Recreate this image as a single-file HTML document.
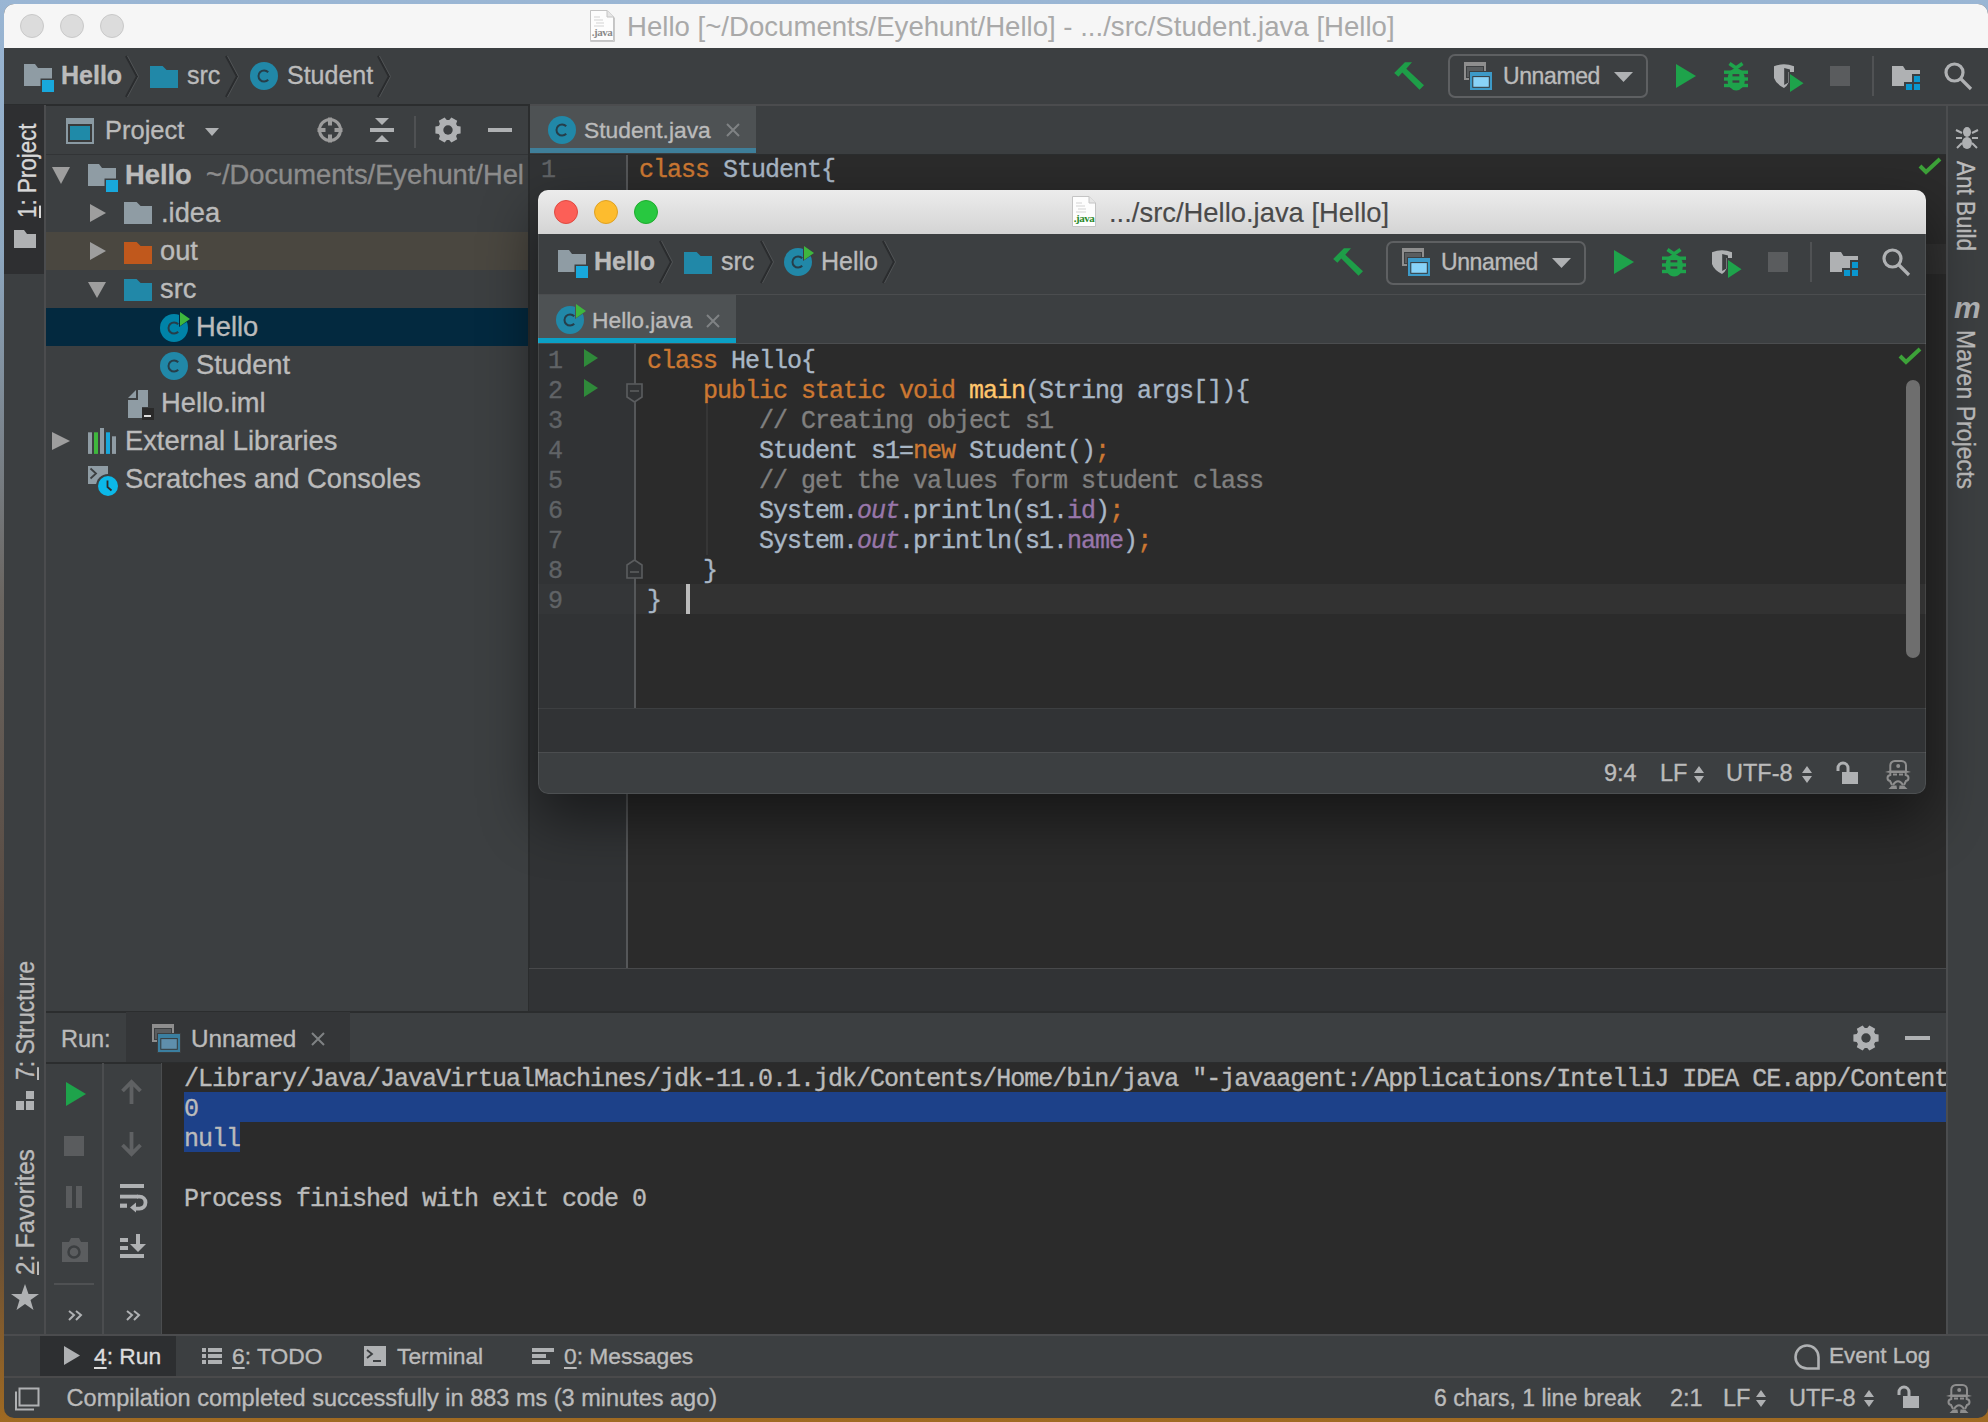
<!DOCTYPE html>
<html><head><meta charset="utf-8"><style>
*{box-sizing:border-box}
html,body{margin:0;padding:0;width:1988px;height:1422px;overflow:hidden}
body{position:relative;background:linear-gradient(180deg,#9ab6d4 0px,#8ea8c0 250px,#6a6560 600px,#54443a 1000px,#6a5035 1250px,#a06a22 1422px);font-family:"Liberation Sans",sans-serif;color:#bbbbbb}
.a{position:absolute}
.s{position:absolute;white-space:pre;line-height:1;font-family:"Liberation Sans",sans-serif;-webkit-text-stroke:0.35px currentColor}
.m{position:absolute;white-space:pre;font-family:"Liberation Mono",monospace;font-size:25px;letter-spacing:-1px;line-height:30px;color:#a9b7c6;-webkit-text-stroke:0.35px currentColor}
.kw{color:#cc7832}
.fn{color:#ffc66d}
.fd{color:#9876aa;font-style:italic}
.fd2{color:#9876aa}
.cm{color:#808080}
.ln{color:#606366}
svg.L{position:absolute;left:0;top:0;width:1988px;height:1422px;overflow:visible}
u{text-decoration:underline;text-underline-offset:3px;text-decoration-thickness:2px}
</style></head><body>
<div class="a" style="left:4px;top:4px;width:1984px;height:1414px;background:#3c3f41;border-radius:10px"></div>
<div class="a" style="left:4px;top:4px;width:1984px;height:44px;background:#f6f6f6;border-radius:10px 10px 0 0"></div>
<div class="a" style="left:20px;top:14px;width:24px;height:24px;border-radius:50%;background:#dcdcdc;border:1px solid #c9c9c9"></div>
<div class="a" style="left:60px;top:14px;width:24px;height:24px;border-radius:50%;background:#dcdcdc;border:1px solid #c9c9c9"></div>
<div class="a" style="left:100px;top:14px;width:24px;height:24px;border-radius:50%;background:#dcdcdc;border:1px solid #c9c9c9"></div>
<div class="a" style="left:4px;top:104px;width:526px;height:2px;background:#2b2d2e;"></div>
<div class="a" style="left:530px;top:104px;width:1458px;height:2px;background:#4b4c4e;"></div>
<div class="a" style="left:4px;top:105px;width:40px;height:169px;background:#2e2f31;"></div>
<div class="a" style="left:44px;top:105px;width:2px;height:1230px;background:#4b4c4e;"></div>
<div class="a" style="left:46px;top:154px;width:482px;height:1px;background:#323436;"></div>
<div class="a" style="left:46px;top:232px;width:482px;height:38px;background:#4a4740;"></div>
<div class="a" style="left:46px;top:308px;width:482px;height:38px;background:#03293f;"></div>
<div class="a" style="left:414px;top:116px;width:2px;height:32px;background:#4f5153;"></div>
<div class="a" style="left:528px;top:105px;width:2px;height:907px;background:#2b2d2e;"></div>
<div class="a" style="left:530px;top:106px;width:226px;height:47px;background:#4e5254;"></div>
<div class="a" style="left:530px;top:148px;width:226px;height:5px;background:#3f7f9a;"></div>
<div class="a" style="left:530px;top:154px;width:1416px;height:1px;background:#2b2d2e;"></div>
<div class="a" style="left:530px;top:155px;width:96px;height:813px;background:#313335;"></div>
<div class="a" style="left:626px;top:155px;width:2px;height:813px;background:#555759;"></div>
<div class="a" style="left:628px;top:155px;width:1318px;height:813px;background:#2b2b2b;"></div>
<div class="a" style="left:628px;top:244px;width:1318px;height:30px;background:#323232;"></div>
<div class="a" style="left:529px;top:968px;width:1417px;height:1px;background:#48494b;"></div>
<div class="a" style="left:529px;top:969px;width:1417px;height:42px;background:#313335;"></div>
<div class="a" style="left:1946px;top:105px;width:2px;height:1230px;background:#4b4d4f;"></div>
<div class="a" style="left:46px;top:1011px;width:1900px;height:2px;background:#2b2d2e;"></div>
<div class="a" style="left:126px;top:1012px;width:224px;height:50px;background:#343638;"></div>
<div class="a" style="left:46px;top:1062px;width:1900px;height:2px;background:#2b2d2e;"></div>
<div class="a" style="left:102px;top:1063px;width:2px;height:272px;background:#4b4d4f;"></div>
<div class="a" style="left:161px;top:1063px;width:1px;height:272px;background:#4b4d4f;"></div>
<div class="a" style="left:162px;top:1063px;width:1784px;height:272px;background:#2b2b2b;"></div>
<div class="a" style="left:184px;top:1092px;width:1762px;height:30px;background:#1d4189;"></div>
<div class="a" style="left:184px;top:1122px;width:56px;height:30px;background:#1d4189;"></div>
<div class="a" style="left:54px;top:1283px;width:40px;height:2px;background:#4f5153;"></div>
<div class="a" style="left:4px;top:1334px;width:1984px;height:2px;background:#4b4c4e;"></div>
<div class="a" style="left:40px;top:1336px;width:136px;height:40px;background:#2d2f31;"></div>
<div class="a" style="left:4px;top:1376px;width:1984px;height:2px;background:#4a4a4b;"></div>
<div class="s" style="left:627px;top:13.1px;font-size:27.6px;color:#a9a9a9;-webkit-text-stroke:0">Hello [~/Documents/Eyehunt/Hello] - .../src/Student.java [Hello]</div>
<div class="s" style="left:61px;top:62.8px;font-size:25px;color:#bbbbbb;font-weight:bold">Hello</div>
<div class="s" style="left:187px;top:62.8px;font-size:25px;color:#bbbbbb;">src</div>
<div class="s" style="left:287px;top:62.8px;font-size:25px;color:#bbbbbb;">Student</div>
<div class="s" style="left:1503px;top:64.5px;font-size:23px;color:#bbbbbb;letter-spacing:-0.4px">Unnamed</div>
<div class="s" style="left:105px;top:118.0px;font-size:25.5px;color:#bbbbbb;">Project</div>
<div class="s" style="left:125px;top:160.9px;font-size:27.3px;color:#bbbbbb;font-weight:bold">Hello</div>
<div class="s" style="left:161px;top:198.9px;font-size:27.3px;color:#bbbbbb;">.idea</div>
<div class="s" style="left:160px;top:236.9px;font-size:27.3px;color:#bbbbbb;">out</div>
<div class="s" style="left:160px;top:274.9px;font-size:27.3px;color:#bbbbbb;">src</div>
<div class="s" style="left:196px;top:312.9px;font-size:27.3px;color:#bbbbbb;">Hello</div>
<div class="s" style="left:196px;top:350.9px;font-size:27.3px;color:#bbbbbb;">Student</div>
<div class="s" style="left:161px;top:388.9px;font-size:27.3px;color:#bbbbbb;">Hello.iml</div>
<div class="s" style="left:125px;top:426.9px;font-size:27.3px;color:#bbbbbb;">External Libraries</div>
<div class="s" style="left:125px;top:464.9px;font-size:27.3px;color:#bbbbbb;">Scratches and Consoles</div>
<div class="s" style="left:206px;top:160.9px;font-size:27.3px;color:#8c8c8c;">~/Documents/Eyehunt/Hel</div>
<div class="s" style="left:584px;top:118.7px;font-size:22.8px;color:#bbbbbb;">Student.java</div>
<div class="m" style="left:541px;top:156.3px;"><span class="ln">1</span></div>
<div class="m" style="left:639px;top:156.3px;"><span class="kw">class</span> Student{</div>
<div class="s" style="left:61px;top:1028.1px;font-size:23.5px;color:#bbbbbb;">Run:</div>
<div class="s" style="left:191px;top:1027.4px;font-size:24.3px;color:#bbbbbb;">Unnamed</div>
<div class="m" style="left:184px;top:1065.3px;color:#bbbbbb;width:1762px;overflow:hidden">/Library/Java/JavaVirtualMachines/jdk-11.0.1.jdk/Contents/Home/bin/java "-javaagent:/Applications/IntelliJ IDEA CE.app/Contents/Lib/idea_rt.jar</div>
<div class="m" style="left:184px;top:1095.3px;color:#bbbbbb">0</div>
<div class="m" style="left:184px;top:1125.3px;color:#bbbbbb">null</div>
<div class="m" style="left:184px;top:1185.3px;color:#bbbbbb">Process finished with exit code 0</div>
<div class="s" style="left:94px;top:1344.7px;font-size:22.8px;color:#dddddd;"><u>4</u>: Run</div>
<div class="s" style="left:232px;top:1344.7px;font-size:22.8px;color:#bbbbbb;"><u>6</u>: TODO</div>
<div class="s" style="left:397px;top:1344.7px;font-size:22.8px;color:#bbbbbb;">Terminal</div>
<div class="s" style="left:564px;top:1344.7px;font-size:22.8px;color:#bbbbbb;"><u>0</u>: Messages</div>
<div class="s" style="left:1829px;top:1345.0px;font-size:22.5px;color:#bbbbbb;">Event Log</div>
<div class="s" style="left:66.6px;top:1386.6px;font-size:23.5px;color:#bbbbbb;">Compilation completed successfully in 883 ms (3 minutes ago)</div>
<div class="s" style="left:1434px;top:1387.0px;font-size:23px;color:#bbbbbb;">6 chars, 1 line break</div>
<div class="s" style="left:1670px;top:1386.6px;font-size:23.5px;color:#bbbbbb;">2:1</div>
<div class="s" style="left:1723px;top:1386.6px;font-size:23.5px;color:#bbbbbb;">LF</div>
<div class="s" style="left:1789px;top:1386.6px;font-size:23.5px;color:#bbbbbb;">UTF-8</div>
<div class="s" style="left:35.5px;top:218px;font-size:26px;color:#d8d8d8;transform-origin:0 0;transform:rotate(-90deg) scaleX(0.86) translateY(-22.0px)"><u>1</u>: Project</div>
<div class="s" style="left:33.5px;top:1080px;font-size:26px;color:#bbbbbb;transform-origin:0 0;transform:rotate(-90deg) scaleX(0.885) translateY(-22.0px)"><u>7</u>: Structure</div>
<div class="s" style="left:33.5px;top:1275px;font-size:26px;color:#bbbbbb;transform-origin:0 0;transform:rotate(-90deg) scaleX(0.927) translateY(-22.0px)"><u>2</u>: Favorites</div>
<div class="s" style="left:1957px;top:161px;font-size:26px;color:#bbbbbb;transform-origin:0 0;transform:rotate(90deg) scaleX(0.865) translateY(-22.0px)">Ant Build</div>
<div class="s" style="left:1957px;top:330px;font-size:26px;color:#bbbbbb;transform-origin:0 0;transform:rotate(90deg) scaleX(0.888) translateY(-22.0px)">Maven Projects</div>
<svg class="L"><path d="M590.5 10.5H607L614.5 18V41.5H590.5Z" fill="#fbfbfb" stroke="#c8c8c8"/><g transform="translate(590,10)"><path d="M0.5 0.5H17L23.5 7V30.5H0.5Z" fill="#fdfdfd" stroke="#c4c4c4"/><path d="M17 0.5V7H23.5" fill="#e6e6e6" stroke="#c4c4c4"/><path d="M4 7h6M4 10h9M6 13h8M4 16h10" stroke="#c8c8c8" stroke-width="0.8"/><text x="12.0" y="26" font-family="Liberation Serif" font-weight="bold" font-size="11" fill="#8a8a8a" text-anchor="middle" letter-spacing="-0.5">.java</text></g><path d="M24 64h11l3 4h14v11h-10v7H24Z" fill="#8f9ca4"/><rect x="40.5" y="78.5" width="15" height="15" fill="#3c3f41"/><rect x="42" y="80" width="12" height="12" fill="#18a8dc"/><path d="M126 56L137 76.5L126 97" fill="none" stroke="#2a2c2e" stroke-width="2.2"/><path d="M127.5 56L138.5 76.5L127.5 97" fill="none" stroke="#505355" stroke-width="1"/><path d="M150 66h12.6l4.0 4.0H178V88H150Z" fill="#2188a8"/><path d="M226 56L237 76.5L226 97" fill="none" stroke="#2a2c2e" stroke-width="2.2"/><path d="M227.5 56L238.5 76.5L227.5 97" fill="none" stroke="#505355" stroke-width="1"/><circle cx="264" cy="76" r="14" fill="#2188a8"/><path d="M268.2 72.2A5.6 5.6 0 1 0 268.2 79.8" fill="none" stroke="#263e4a" stroke-width="2"/><path d="M378 56L389 76.5L378 97" fill="none" stroke="#2a2c2e" stroke-width="2.2"/><path d="M379.5 56L390.5 76.5L379.5 97" fill="none" stroke="#505355" stroke-width="1"/><g transform="translate(0,0)"><path d="M1394.2 72.9L1404.9 62.2L1412 62.2L1406.3 68.7L1424 85.3L1419.5 89.8L1402.3 72.6L1398.4 76.8Z" fill="#1e9e48"/></g><rect x="1449" y="55" width="198" height="42" rx="6" fill="none" stroke="#5e6062" stroke-width="2"/><g transform="translate(0,0)"><rect x="1464" y="62" width="22" height="18" fill="#8e8e8e"/><rect x="1466" y="66" width="18" height="12" fill="#3c3f41"/><rect x="1467" y="67" width="16" height="10" fill="#5a5d5f"/><rect x="1469" y="71" width="24" height="20" fill="#3c3f41"/><rect x="1470" y="72" width="22" height="18" fill="#3d9ac8"/><rect x="1472.3" y="76.1" width="17.5" height="11.7" fill="#3a3a3a"/><rect x="1473.3" y="77.1" width="15.5" height="9.7" fill="#89d3f8"/></g><path d="M1614 72H1633L1623.5 82Z" fill="#afb1b3"/><path d="M1676 64L1696 76.0L1676 88Z" fill="#1ea34b"/><g transform="translate(0,0)" fill="#1ea34b"><path d="M1729.5 63.5L1736 68L1742.5 63.5" fill="none" stroke="#1ea34b" stroke-width="3.6"/><ellipse cx="1736.2" cy="79.5" rx="8.8" ry="11"/><rect x="1724" y="70.5" width="24" height="3.4"/><rect x="1724" y="77.3" width="24" height="3.4"/><rect x="1724" y="83.8" width="24" height="3.4"/><rect x="1732.5" y="74.1" width="6.8" height="2.3" fill="#3c3f41"/><rect x="1732.5" y="80.4" width="6.8" height="2.3" fill="#3c3f41"/></g><g transform="translate(0,0)"><path d="M1774 66.2Q1784 62.5 1794 66.2V72H1789V82Q1787 86 1784 88Q1776 84 1774 78Z" fill="#afb1b3"/><path d="M1784.2 68L1790 69.4V72H1788.5V82.5L1784.2 85Z" fill="#3c3f41"/><path d="M1790 74.1L1803.5 83.2L1790 92Z" fill="#1ea34b"/></g><rect x="1830" y="66" width="20" height="20" fill="#5a5c5e"/><rect x="1872" y="56" width="2" height="40" fill="#505254"/><g transform="translate(0,0)"><path d="M1892 66H1903L1905.5 70.1H1920V74H1912V82H1904V86H1892Z" fill="#afb1b3"/><rect x="1914" y="76" width="6" height="6" fill="#0a97cf"/><rect x="1906" y="84" width="6" height="6" fill="#0a97cf"/><rect x="1914" y="84" width="6" height="6" fill="#0a97cf"/></g><g transform="translate(1944,62)" fill="none" stroke="#afb1b3" stroke-width="3.2"><circle cx="10.5" cy="10.5" r="8.5"/><path d="M16.5 16.5L27 27"/></g><rect x="66" y="118" width="28" height="26" fill="#8a9aa3"/><rect x="68" y="124" width="24" height="18" fill="#3a3a3a"/><rect x="70" y="126" width="20" height="14" fill="#1f8aa8"/><path d="M205 128H219L212.0 136Z" fill="#afb1b3"/><g fill="none" stroke="#9c9c9c" stroke-width="3"><circle cx="330" cy="130" r="10.5"/></g><g fill="#9c9c9c"><rect x="328" y="117.5" width="4" height="8"/><rect x="328" y="134.5" width="4" height="8"/><rect x="317.5" y="128" width="8" height="4"/><rect x="334.5" y="128" width="8" height="4"/></g><path d="M375 118H389L382 125Z" fill="#afb1b3"/><rect x="370" y="128" width="24" height="4" fill="#afb1b3"/><path d="M375 142H389L382 135Z" fill="#afb1b3"/><path d="M460.6 126.6 L460.6 133.4 L457.3 134.0 L456.1 136.1 L457.2 139.2 L451.4 142.6 L449.2 140.1 L446.8 140.1 L444.6 142.6 L438.8 139.2 L439.9 136.1 L438.7 134.0 L435.4 133.4 L435.4 126.6 L438.7 126.0 L439.9 123.9 L438.8 120.8 L444.6 117.4 L446.8 119.9 L449.2 119.9 L451.4 117.4 L457.2 120.8 L456.1 123.9 L457.3 126.0Z" fill="#afb1b3"/><circle cx="448" cy="130" r="4.7" fill="#3c3f41"/><rect x="488" y="128" width="24" height="4" fill="#afb1b3"/><path d="M52 167H70L61.0 184Z" fill="#9e9e9e"/><path d="M88 164h11l3 4h14v11h-10v7H88Z" fill="#8f9ca4"/><rect x="104.5" y="178.5" width="15" height="15" fill="#3c3f41"/><rect x="106" y="180" width="12" height="12" fill="#18a8dc"/><path d="M90 204L106 213.0L90 222Z" fill="#9e9e9e"/><path d="M124 202h12.6l4.0 4.0H152V224H124Z" fill="#8f9ca4"/><path d="M90 242L106 251.0L90 260Z" fill="#9e9e9e"/><path d="M124 242h12.6l4.0 4.0H152V264H124Z" fill="#c0581c"/><path d="M88 282H106L97.0 298Z" fill="#9e9e9e"/><path d="M124 279h12.6l4.0 4.0H152V301H124Z" fill="#2188a8"/><circle cx="174" cy="328" r="14" fill="#0083a8"/><path d="M178.2 324.2A5.6 5.6 0 1 0 178.2 331.8" fill="none" stroke="#263e4a" stroke-width="2"/><path d="M179 311L191 319L179 327Z" fill="#03293f"/><path d="M180 312L190 319L180 326Z" fill="#3fb73d"/><circle cx="174" cy="366" r="14" fill="#2188a8"/><path d="M178.2 362.2A5.6 5.6 0 1 0 178.2 369.8" fill="none" stroke="#263e4a" stroke-width="2"/><path d="M128 398L136 390V398Z" fill="#8f9ca4"/><path d="M138 390H148V407H142V418H128V400H138Z" fill="#8f9ca4"/><rect x="142" y="408" width="12" height="12" fill="#2a2a2a"/><rect x="144" y="415" width="7" height="2" fill="#dddddd"/><path d="M52 432L70 441.0L52 450Z" fill="#9e9e9e"/><rect x="88" y="432.3" width="4" height="21.6" fill="#8f9ca4"/><rect x="94" y="432.3" width="4" height="21.6" fill="#3fb73d"/><rect x="100" y="428" width="4" height="25.9" fill="#8f9ca4"/><rect x="106" y="432.3" width="4" height="21.6" fill="#18a8dc"/><rect x="112" y="436.3" width="4" height="17.6" fill="#8f9ca4"/><rect x="88" y="466" width="20" height="18" fill="#8f9ca4"/><path d="M90.5 468.5L96 473.5L90.5 478.5" fill="none" stroke="#3c3f41" stroke-width="1.8"/><circle cx="108" cy="486" r="12" fill="#3c3f41"/><circle cx="108" cy="486" r="10" fill="#0bb8e8"/><path d="M107.5 480.5V487L111.5 490.5" fill="none" stroke="#2b2b2b" stroke-width="1.8"/><circle cx="562" cy="130" r="14" fill="#2188a8"/><path d="M566.2 126.2A5.6 5.6 0 1 0 566.2 133.8" fill="none" stroke="#263e4a" stroke-width="2"/><path d="M727 124L739 136M739 124L727 136" stroke="#7f8284" stroke-width="2"/><path d="M1920 166L1926 172L1940 159" fill="none" stroke="#3da239" stroke-width="4"/><path d="M14 230H24L27 234H36V248H14Z" fill="#afb1b3"/><rect x="16" y="1101" width="8" height="9" fill="#afb1b3"/><rect x="26" y="1101" width="8" height="9" fill="#afb1b3"/><rect x="26" y="1091" width="8" height="8" fill="#afb1b3"/><path d="M25 1284L28.5 1294H39L30.5 1300L33.5 1310L25 1304L16.5 1310L19.5 1300L11 1294H21.5Z" fill="#afb1b3"/><g transform="translate(1956,126)" fill="#afb1b3"><ellipse cx="11" cy="6" rx="4" ry="5"/><ellipse cx="11" cy="17" rx="5" ry="6"/><path d="M0 4L6 7M22 4L16 7M0 12L6 12M22 12L16 12M1 22L6 17M21 22L16 17" stroke="#afb1b3" stroke-width="2"/></g><text x="1954" y="318" font-family="Liberation Sans" font-weight="bold" font-style="italic" font-size="30" fill="#afb1b3">m</text><g transform="translate(-1312,962)"><rect x="1464" y="62" width="22" height="18" fill="#8e8e8e"/><rect x="1466" y="66" width="18" height="12" fill="#3c3f41"/><rect x="1467" y="67" width="16" height="10" fill="#5a5d5f"/><rect x="1469" y="71" width="24" height="20" fill="#3c3f41"/><rect x="1470" y="72" width="22" height="18" fill="#3b7fa0"/><rect x="1472.3" y="76.1" width="17.5" height="11.7" fill="#3a3a3a"/><rect x="1473.3" y="77.1" width="15.5" height="9.7" fill="#5f8fac"/></g><path d="M312 1033L324 1045M324 1033L312 1045" stroke="#7f8284" stroke-width="2"/><path d="M1878.6 1034.6 L1878.6 1041.4 L1875.3 1042.0 L1874.1 1044.1 L1875.2 1047.2 L1869.4 1050.6 L1867.2 1048.1 L1864.8 1048.1 L1862.6 1050.6 L1856.8 1047.2 L1857.9 1044.1 L1856.7 1042.0 L1853.4 1041.4 L1853.4 1034.6 L1856.7 1034.0 L1857.9 1031.9 L1856.8 1028.8 L1862.6 1025.4 L1864.8 1027.9 L1867.2 1027.9 L1869.4 1025.4 L1875.2 1028.8 L1874.1 1031.9 L1875.3 1034.0Z" fill="#afb1b3"/><circle cx="1866" cy="1038" r="4.7" fill="#3c3f41"/><rect x="1905" y="1036" width="25" height="4" fill="#afb1b3"/><path d="M66 1082L86 1094.0L66 1106Z" fill="#1ea34b"/><rect x="64" y="1136" width="20" height="20" fill="#5a5c5e"/><rect x="66" y="1186" width="6" height="22" fill="#5a5c5e"/><rect x="76" y="1186" width="6" height="22" fill="#5a5c5e"/><g transform="translate(60,1238)"><path d="M2 4h7l2-4h8l2 4h7v20H2Z" fill="#5b5d5f"/><circle cx="14" cy="14" r="5.5" fill="none" stroke="#3c3f41" stroke-width="2.5"/></g><path d="M69 1311L74 1315L69 1320M76 1311L81 1315L76 1320" fill="none" stroke="#afb1b3" stroke-width="2"/><path d="M131.5 1104V1083M122.5 1091L131.5 1082L140.5 1091" fill="none" stroke="#5f6163" stroke-width="3.8"/><path d="M131.5 1132V1153M122.5 1145L131.5 1154L140.5 1145" fill="none" stroke="#5f6163" stroke-width="3.8"/><g fill="#afb1b3"><rect x="120" y="1184" width="24" height="4"/><rect x="120" y="1194.7" width="18" height="3.8"/><rect x="120" y="1203.6" width="7" height="4.2"/></g><path d="M137 1196.6H139.5A6 6 0 0 1 139.5 1208.6H134" fill="none" stroke="#afb1b3" stroke-width="3.8"/><path d="M136 1202.6L130 1207.6L136 1212.6Z" fill="#afb1b3"/><g fill="#afb1b3"><rect x="120" y="1238" width="8" height="4"/><rect x="120" y="1246" width="8" height="4"/><rect x="120" y="1254" width="24" height="4"/><rect x="136" y="1234" width="4" height="10"/><path d="M130 1244H146L138 1252Z"/></g><path d="M127 1311L132 1315L127 1320M134 1311L139 1315L134 1320" fill="none" stroke="#afb1b3" stroke-width="2"/><path d="M64 1346L80 1355.5L64 1365Z" fill="#afb1b3"/><g fill="#afb1b3"><rect x="202" y="1348" width="4" height="4"/><rect x="208" y="1348" width="14" height="4"/><rect x="202" y="1354" width="4" height="4"/><rect x="208" y="1354" width="14" height="4"/><rect x="202" y="1360" width="4" height="4"/><rect x="208" y="1360" width="14" height="4"/></g><rect x="364" y="1346" width="22" height="20" fill="#afb1b3"/><path d="M367 1350L372 1354L367 1358" fill="none" stroke="#3c3f41" stroke-width="1.8"/><rect x="373" y="1360" width="8" height="2" fill="#3c3f41"/><g fill="#afb1b3"><rect x="532" y="1348" width="22" height="4"/><rect x="532" y="1354" width="14" height="4"/><rect x="532" y="1360" width="18" height="4"/></g><path d="M1818.5 1368.5H1807A11.5 11.5 0 1 1 1818.5 1357Z" fill="none" stroke="#afb1b3" stroke-width="2.6"/><rect x="19.5" y="1388.5" width="19" height="17" fill="none" stroke="#afb1b3" stroke-width="2"/><path d="M16 1391.5V1409.5H34" fill="none" stroke="#afb1b3" stroke-width="2"/><path d="M1756 1397L1761 1390L1766 1397Z M1756 1400L1761 1407L1766 1400Z" fill="#afb1b3"/><path d="M1864 1397L1869 1390L1874 1397Z M1864 1400L1869 1407L1874 1400Z" fill="#afb1b3"/><g transform="translate(1897,1386)"><rect x="6" y="10" width="16" height="12" fill="#afb1b3"/><path d="M2 9V6A5 5 0 0 1 12 6V10" fill="none" stroke="#afb1b3" stroke-width="3"/></g><g transform="translate(1946,1384)" fill="none" stroke="#8e8e8e" stroke-width="2"><path d="M5.3 11V5.5A4.5 4.5 0 0 1 9.8 1H16.5A4.5 4.5 0 0 1 21 5.5V11"/><path d="M0 12L5 10.5H21L26 12L21 13H5Z" fill="#8e8e8e" stroke="none"/><circle cx="13.2" cy="6" r="2" fill="#8e8e8e" stroke="none"/><rect x="8" y="13.5" width="4" height="2" fill="#8e8e8e" stroke="none"/><rect x="14" y="13.5" width="4" height="2" fill="#8e8e8e" stroke="none"/><path d="M5.3 13V15Q2.5 15.5 2.5 18Q2.5 20.5 5 21L7 25"/><path d="M20.7 13V15Q23.5 15.5 23.5 18Q23.5 20.5 21 21L19 25"/><path d="M8 25Q13 17.5 18 25"/><path d="M3.5 29L7 25.5H11.5L12 29Z" fill="#8e8e8e" stroke="none"/><path d="M22.5 29L19 25.5H14.5L14 29Z" fill="#8e8e8e" stroke="none"/></g></svg>
<div class="a" style="left:538px;top:190px;width:1388px;height:604px;border-radius:10px;overflow:hidden;background:#3c3f41;box-shadow:0 24px 56px 2px rgba(0,0,0,.48)">
<div class="a" style="left:0px;top:0px;width:1388px;height:44px;background:#dcdcdc;background:linear-gradient(#ececec,#d4d4d4)"></div>
<div class="a" style="left:16px;top:10px;width:24px;height:24px;border-radius:50%;background:#fc5f57;border:1px solid #de4a41"></div>
<div class="a" style="left:56px;top:10px;width:24px;height:24px;border-radius:50%;background:#fdbc2e;border:1px solid #dea123"></div>
<div class="a" style="left:96px;top:10px;width:24px;height:24px;border-radius:50%;background:#28c840;border:1px solid #1eac2d"></div>
<div class="a" style="left:0px;top:104px;width:1388px;height:1px;background:#4b4d4f;"></div>
<div class="a" style="left:0px;top:105px;width:198px;height:48px;background:#4e5254;"></div>
<div class="a" style="left:0px;top:148px;width:198px;height:5px;background:#0ba0c5;"></div>
<div class="a" style="left:0px;top:153px;width:1388px;height:1px;background:#4b4d4f;"></div>
<div class="a" style="left:0px;top:154px;width:96px;height:364px;background:#313335;"></div>
<div class="a" style="left:96px;top:154px;width:1px;height:364px;background:#555759;"></div>
<div class="a" style="left:97px;top:154px;width:1291px;height:364px;background:#2b2b2b;"></div>
<div class="a" style="left:0px;top:394px;width:96px;height:30px;background:#343638;"></div>
<div class="a" style="left:97px;top:394px;width:1291px;height:30px;background:#323232;"></div>
<div class="a" style="left:0px;top:518px;width:1388px;height:1px;background:#3d3f41;"></div>
<div class="a" style="left:0px;top:519px;width:1388px;height:43px;background:#313335;"></div>
<div class="a" style="left:0px;top:562px;width:1388px;height:1px;background:#4b4d4f;"></div>
<div class="a" style="left:1368px;top:190px;width:14px;height:278px;background:#6e6e6e;border-radius:7px"></div>
<div class="a" style="left:148px;top:394px;width:4px;height:30px;background:#bbbbbb;"></div>
<div class="s" style="left:571px;top:9.4px;font-size:27.4px;color:#4a4a4a;-webkit-text-stroke:0.15px #4a4a4a">.../src/Hello.java [Hello]</div>
<div class="s" style="left:56px;top:58.8px;font-size:25px;color:#bbbbbb;font-weight:bold">Hello</div>
<div class="s" style="left:183px;top:58.8px;font-size:25px;color:#bbbbbb;">src</div>
<div class="s" style="left:283px;top:58.8px;font-size:25px;color:#bbbbbb;">Hello</div>
<div class="s" style="left:903px;top:60.5px;font-size:23px;color:#bbbbbb;letter-spacing:-0.4px">Unnamed</div>
<div class="s" style="left:54px;top:118.7px;font-size:22.8px;color:#bbbbbb;">Hello.java</div>
<div class="m" style="left:10px;top:157.3px;"><span class="ln">1</span></div>
<div class="m" style="left:109px;top:157.3px;"><span class="kw">class</span> Hello{</div>
<div class="m" style="left:10px;top:187.3px;"><span class="ln">2</span></div>
<div class="m" style="left:109px;top:187.3px;">    <span class="kw">public static void</span> <span class="fn">main</span>(String args[]){</div>
<div class="m" style="left:10px;top:217.3px;"><span class="ln">3</span></div>
<div class="m" style="left:109px;top:217.3px;">        <span class="cm">// Creating object s1</span></div>
<div class="m" style="left:10px;top:247.3px;"><span class="ln">4</span></div>
<div class="m" style="left:109px;top:247.3px;">        Student s1=<span class="kw">new</span> Student()<span class="kw">;</span></div>
<div class="m" style="left:10px;top:277.4px;"><span class="ln">5</span></div>
<div class="m" style="left:109px;top:277.4px;">        <span class="cm">// get the values form student class</span></div>
<div class="m" style="left:10px;top:307.4px;"><span class="ln">6</span></div>
<div class="m" style="left:109px;top:307.4px;">        System.<span class="fd">out</span>.println(s1.<span class="fd2">id</span>)<span class="kw">;</span></div>
<div class="m" style="left:10px;top:337.4px;"><span class="ln">7</span></div>
<div class="m" style="left:109px;top:337.4px;">        System.<span class="fd">out</span>.println(s1.<span class="fd2">name</span>)<span class="kw">;</span></div>
<div class="m" style="left:10px;top:367.4px;"><span class="ln">8</span></div>
<div class="m" style="left:109px;top:367.4px;">    }</div>
<div class="m" style="left:10px;top:397.4px;"><span class="ln">9</span></div>
<div class="m" style="left:109px;top:397.4px;">}</div>
<div class="s" style="left:1066px;top:572.1px;font-size:23.5px;color:#bbbbbb;">9:4</div>
<div class="s" style="left:1122px;top:572.1px;font-size:23.5px;color:#bbbbbb;">LF</div>
<div class="s" style="left:1188px;top:572.1px;font-size:23.5px;color:#bbbbbb;">UTF-8</div>
<svg class="L" style="left:-538px;top:-190px"><g transform="translate(1072,196)"><path d="M0.5 0.5H17L23.5 7V30.5H0.5Z" fill="#fdfdfd" stroke="#c4c4c4"/><path d="M17 0.5V7H23.5" fill="#e6e6e6" stroke="#c4c4c4"/><path d="M4 7h6M4 10h9M6 13h8M4 16h10" stroke="#c8c8c8" stroke-width="0.8"/><text x="12.0" y="26" font-family="Liberation Serif" font-weight="bold" font-size="11" fill="#2a8a2a" text-anchor="middle" letter-spacing="-0.5">.java</text></g><path d="M558 250h11l3 4h14v11h-10v7H558Z" fill="#8f9ca4"/><rect x="574.5" y="264.5" width="15" height="15" fill="#3c3f41"/><rect x="576" y="266" width="12" height="12" fill="#18a8dc"/><path d="M660 241L671 262.0L660 283" fill="none" stroke="#2a2c2e" stroke-width="2.2"/><path d="M661.5 241L672.5 262.0L661.5 283" fill="none" stroke="#505355" stroke-width="1"/><path d="M684 252h12.6l4.0 4.0H712V274H684Z" fill="#2188a8"/><path d="M761 241L772 262.0L761 283" fill="none" stroke="#2a2c2e" stroke-width="2.2"/><path d="M762.5 241L773.5 262.0L762.5 283" fill="none" stroke="#505355" stroke-width="1"/><circle cx="798" cy="262" r="14" fill="#2188a8"/><path d="M802.2 258.2A5.6 5.6 0 1 0 802.2 265.8" fill="none" stroke="#263e4a" stroke-width="2"/><path d="M803 245L815 253L803 261Z" fill="#3c3f41"/><path d="M804 246L814 253L804 260Z" fill="#3fb73d"/><path d="M883 241L894 262.0L883 283" fill="none" stroke="#2a2c2e" stroke-width="2.2"/><path d="M884.5 241L895.5 262.0L884.5 283" fill="none" stroke="#505355" stroke-width="1"/><g transform="translate(-61,186)"><path d="M1394.2 72.9L1404.9 62.2L1412 62.2L1406.3 68.7L1424 85.3L1419.5 89.8L1402.3 72.6L1398.4 76.8Z" fill="#1e9e48"/></g><rect x="1387" y="242" width="198" height="42" rx="6" fill="none" stroke="#5e6062" stroke-width="2"/><g transform="translate(-62,186)"><rect x="1464" y="62" width="22" height="18" fill="#8e8e8e"/><rect x="1466" y="66" width="18" height="12" fill="#3c3f41"/><rect x="1467" y="67" width="16" height="10" fill="#5a5d5f"/><rect x="1469" y="71" width="24" height="20" fill="#3c3f41"/><rect x="1470" y="72" width="22" height="18" fill="#3d9ac8"/><rect x="1472.3" y="76.1" width="17.5" height="11.7" fill="#3a3a3a"/><rect x="1473.3" y="77.1" width="15.5" height="9.7" fill="#89d3f8"/></g><path d="M1552 258H1571L1561.5 268Z" fill="#afb1b3"/><path d="M1614 250L1634 262.0L1614 274Z" fill="#1ea34b"/><g transform="translate(-62,186)" fill="#1ea34b"><path d="M1729.5 63.5L1736 68L1742.5 63.5" fill="none" stroke="#1ea34b" stroke-width="3.6"/><ellipse cx="1736.2" cy="79.5" rx="8.8" ry="11"/><rect x="1724" y="70.5" width="24" height="3.4"/><rect x="1724" y="77.3" width="24" height="3.4"/><rect x="1724" y="83.8" width="24" height="3.4"/><rect x="1732.5" y="74.1" width="6.8" height="2.3" fill="#3c3f41"/><rect x="1732.5" y="80.4" width="6.8" height="2.3" fill="#3c3f41"/></g><g transform="translate(-62,186)"><path d="M1774 66.2Q1784 62.5 1794 66.2V72H1789V82Q1787 86 1784 88Q1776 84 1774 78Z" fill="#afb1b3"/><path d="M1784.2 68L1790 69.4V72H1788.5V82.5L1784.2 85Z" fill="#3c3f41"/><path d="M1790 74.1L1803.5 83.2L1790 92Z" fill="#1ea34b"/></g><rect x="1768" y="252" width="20" height="20" fill="#5a5c5e"/><rect x="1810" y="242" width="2" height="40" fill="#505254"/><g transform="translate(-62,186)"><path d="M1892 66H1903L1905.5 70.1H1920V74H1912V82H1904V86H1892Z" fill="#afb1b3"/><rect x="1914" y="76" width="6" height="6" fill="#0a97cf"/><rect x="1906" y="84" width="6" height="6" fill="#0a97cf"/><rect x="1914" y="84" width="6" height="6" fill="#0a97cf"/></g><g transform="translate(1882,248)" fill="none" stroke="#afb1b3" stroke-width="3.2"><circle cx="10.5" cy="10.5" r="8.5"/><path d="M16.5 16.5L27 27"/></g><circle cx="570" cy="320" r="14" fill="#2188a8"/><path d="M574.2 316.2A5.6 5.6 0 1 0 574.2 323.8" fill="none" stroke="#263e4a" stroke-width="2"/><path d="M575 303L587 311L575 319Z" fill="#4e5254"/><path d="M576 304L586 311L576 318Z" fill="#3fb73d"/><path d="M707 315L719 327M719 315L707 327" stroke="#7f8284" stroke-width="2"/><path d="M1900 356L1906 362L1920 349" fill="none" stroke="#3da239" stroke-width="4"/><path d="M584 349L598 358.0L584 367Z" fill="#2f8a3a"/><path d="M584 379L598 388.0L584 397Z" fill="#2f8a3a"/><path d="M627 384H642V397L634.5 402L627 397Z" fill="#313335" stroke="#5b5d5f" stroke-width="1.6"/><path d="M630 391H639" stroke="#5b5d5f" stroke-width="1.6"/><path d="M627 578H642V565L634.5 560L627 565Z" fill="#313335" stroke="#5b5d5f" stroke-width="1.6"/><path d="M630 572H639" stroke="#5b5d5f" stroke-width="1.6"/><path d="M635 344V384M635 402V560M635 578V708" stroke="#555759" stroke-width="2"/><path d="M707 404V555" stroke="#3b3b3b" stroke-width="1.5"/><path d="M1694 773L1699 766L1704 773Z M1694 776L1699 783L1704 776Z" fill="#afb1b3"/><path d="M1802 773L1807 766L1812 773Z M1802 776L1807 783L1812 776Z" fill="#afb1b3"/><g transform="translate(1836,762)"><rect x="6" y="10" width="16" height="12" fill="#afb1b3"/><path d="M2 9V6A5 5 0 0 1 12 6V10" fill="none" stroke="#afb1b3" stroke-width="3"/></g><g transform="translate(1885,760)" fill="none" stroke="#8e8e8e" stroke-width="2"><path d="M5.3 11V5.5A4.5 4.5 0 0 1 9.8 1H16.5A4.5 4.5 0 0 1 21 5.5V11"/><path d="M0 12L5 10.5H21L26 12L21 13H5Z" fill="#8e8e8e" stroke="none"/><circle cx="13.2" cy="6" r="2" fill="#8e8e8e" stroke="none"/><rect x="8" y="13.5" width="4" height="2" fill="#8e8e8e" stroke="none"/><rect x="14" y="13.5" width="4" height="2" fill="#8e8e8e" stroke="none"/><path d="M5.3 13V15Q2.5 15.5 2.5 18Q2.5 20.5 5 21L7 25"/><path d="M20.7 13V15Q23.5 15.5 23.5 18Q23.5 20.5 21 21L19 25"/><path d="M8 25Q13 17.5 18 25"/><path d="M3.5 29L7 25.5H11.5L12 29Z" fill="#8e8e8e" stroke="none"/><path d="M22.5 29L19 25.5H14.5L14 29Z" fill="#8e8e8e" stroke="none"/></g></svg>
<div class="a" style="left:0px;top:0px;width:1388px;height:604px;background:transparent;border-radius:10px;border:1px solid rgba(255,255,255,0.09);border-top:none;pointer-events:none"></div>
</div>
</body></html>
